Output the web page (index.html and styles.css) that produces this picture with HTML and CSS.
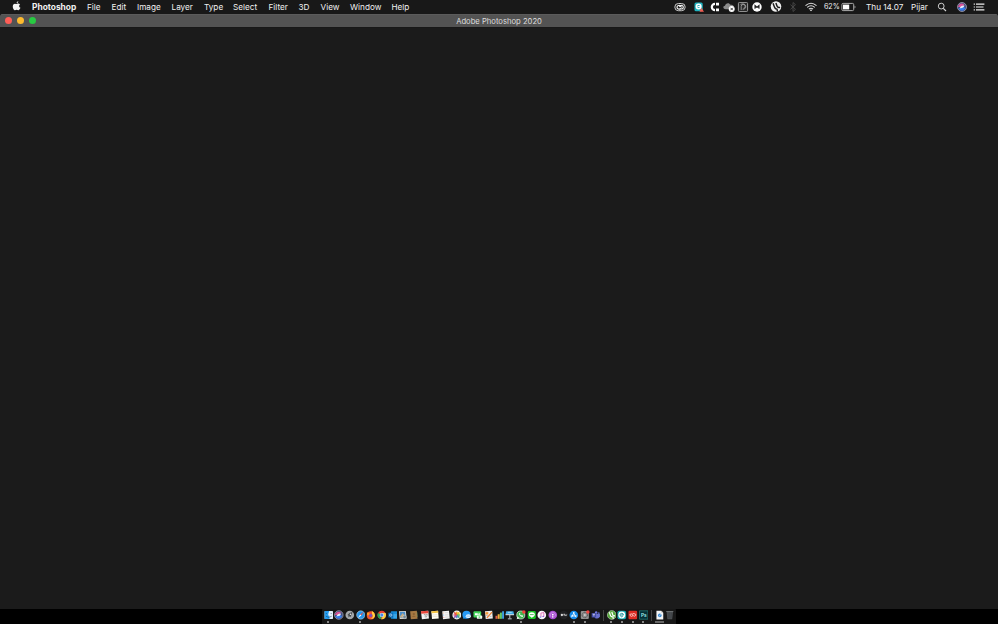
FILE: index.html
```
<!DOCTYPE html>
<html lang="en">
<head>
  <meta charset="UTF-8">
  <title>Adobe Photoshop 2020</title>
  <link rel="stylesheet" href="styles.css">
</head>
<body>
  <header class="menubar">
    <nav class="menus">
      <svg class="apple" viewBox="0 0 10 11"><path d="M7 0.3C5.8 0.5 5 1.4 5.1 2.5C6.3 2.4 7 1.5 7 .3ZM8.9 3.7C7.7 2.4 6.3 2.8 5.3 3.2C4.5 3.2 2.7 2.2 1.5 3.8C0 5.9 1.5 9.7 3.1 10.2C4 10.3 4.4 9.8 5.2 9.8C6 9.8 6.4 10.3 7.2 10.2C8.2 9.9 9 8.5 9.4 7.5C7.5 6.7 7.5 4.7 8.9 3.7Z"/></svg>
      <b>Photoshop</b>
      <span>File</span>
      <span>Edit</span>
      <span>Image</span>
      <span>Layer</span>
      <span>Type</span>
      <span>Select</span>
      <span>Filter</span>
      <span>3D</span>
      <span>View</span>
      <span>Window</span>
      <span>Help</span>
    </nav>
    <div class="status">
      <svg viewBox="0 0 12 10"><rect x=".8" y="1.5" width="10.4" height="7.2" rx="3.6" fill="none" stroke="#ccc"/><path d="M6.6 6.5C5.5 7.8 3 7 3 5.2S5.4 2.8 6.5 4.1L7.6 5.5M5.5 5C6.1 2.7 9.3 3.1 9.3 5.2S7 7.4 6.2 6.3" fill="none" stroke="#eee" stroke-width="1.2"/></svg>
      <svg viewBox="0 0 10 10"><rect x=".5" y=".6" width="8.2" height="8.6" rx="1.5" fill="#20b3bf"/><circle cx="4.6" cy="4.5" r="2.2" fill="#20b3bf" stroke="#fff" stroke-width="1.6"/><path d="M3.5 4.5h3" stroke="#fff"/><path d="M7.3 5.7l2.7 4H5.5z" fill="#f45b50"/></svg>
      <svg viewBox="0 0 10 10"><path d="M5 .7A4.2 4.2 0 0 0 5 9.3V7.1A2.1 2.1 0 0 1 5 2.9ZM6 .7h3v2.8H6zM6 6.5h3v2.8H6z" fill="#fff"/></svg>
      <svg viewBox="0 0 12 10"><path d="M2.8 7.2C-.5 7.1-.2 3.8 2 3.8C2.5 .8 6.3.4 7.4 2.8C10 2.1 11.8 4.5 10.5 7.2Z" fill="#8b8b8b"/><circle cx="8.7" cy="7" r="3" fill="#fff"/><path d="M7.5 5.8l2.4 2.4m0-2.4L7.5 8.2" stroke="#333" stroke-width=".9"/></svg>
      <svg viewBox="0 0 10 10"><rect x=".4" y=".4" width="9.2" height="9.2" rx="1.2" fill="#292929" stroke="#aaa" stroke-width=".9"/><path d="M3.2 8V4.5A2 2 0 1 1 5.4 6.4M2.3 3.1C3.6 1.1 7.4 1.6 7.7 4.3C7.9 6.5 6 7.5 4.6 7.3" fill="none" stroke="#aaa" stroke-width=".8"/></svg>
      <svg viewBox="0 0 10 10"><circle cx="5" cy="5" r="4.7" fill="#fff"/><path d="M3 6.8V3.5L5 5.2L7 3.5V6.8M3 5.1h4" fill="none" stroke="#222" stroke-width="1.1"/></svg>
      <svg class="large" viewBox="0 0 10 10"><circle cx="5" cy="5" r="4.8" fill="#eee"/><path d="M2.3 2L3.4 5Q4.2 7.5 5.6 6.9M4.9 1.8L6 4.8Q6.6 6.4 8.7 5.8M5.8 7L6.4 9.7" fill="none" stroke="#191919" stroke-width="1.3"/></svg>
      <svg viewBox="0 0 10 10"><path d="M2.5 2.7L7.5 7.3L5 9.5V.5L7.5 2.7L2.5 7.3" fill="none" stroke="#4b4b4b" stroke-width=".9"/></svg>
      <svg viewBox="0 0 12 10"><path d="M.5 3.6Q6-1.2 11.5 3.6M2.2 5.4Q6 2.1 9.8 5.4M3.9 7.1Q6 5.3 8.1 7.1" fill="none" stroke="#ddd" stroke-width="1.1"/><path d="M4.8 8L6 9.3L7.2 8Q6 7.2 4.8 8Z" fill="#eee"/></svg>
      <span class="percent">62%</span>
      <svg class="battery" viewBox="0 0 15 10"><rect x=".9" y="1.4" width="11.8" height="7.2" rx="1.2" fill="none" stroke="#bbb" stroke-width=".9"/><path d="M2 2.6h6.2v4.8H2z" fill="#fff"/><path d="M13.6 3.6Q15.3 5 13.6 6.4Z" fill="#bbb"/></svg>
      <span>Thu 14.07</span>
      <span>Pijar</span>
      <svg viewBox="0 0 10 10"><circle cx="4.2" cy="4.1" r="2.9" fill="none" stroke="#ddd" stroke-width=".9"/><path d="M6.3 6.3L9 9" stroke="#ddd" stroke-width="1.1"/></svg>
      <svg viewBox="0 0 10 10"><use href="#siri"/></svg>
      <svg viewBox="0 0 12 10"><path d="M3 2.2h8.4M3 5h7.5M3 7.8h8.4" stroke="#eee" stroke-width="1.2"/><path d="M.7 2.2h1.2M.7 5h1.2M.7 7.8h1.2" stroke="#eee" stroke-width="1.2"/></svg>
    </div>
  </header>

  <main class="window">
    <div class="titlebar">
      <div class="lights">
        <i class="close"></i><i class="minimize"></i><i class="zoom"></i>
      </div>
      <h1>Adobe Photoshop 2020</h1>
    </div>
    <div class="canvas"></div>
  </main>

  <footer class="desktop">
    <div class="dock">
      <!-- Finder, Siri, Launchpad, Safari -->
      <div class="app running"><svg viewBox="0 0 10 10"><rect x=".6" y=".8" width="8.8" height="8.4" rx=".7" fill="#e4f0fb"/><path d="M.6.8h4.9Q4.2 3.5 4.3 5.5h1.2L5.8 9.2H.6z" fill="#249cf0"/><path d="M2.5 3v1M7.5 3v1M2 6.3Q5 8.7 8 6.3" fill="none" stroke="#174260" stroke-width=".6"/></svg></div>
      <div class="app"><svg viewBox="0 0 10 10"><g id="siri"><circle cx="5" cy="5" r="4.5" fill="#444b7c" stroke="#c4c7d6" stroke-width=".6"/><path d="M1 5C2.2 1 5 .8 7.3 2.5L5 5Z" fill="#dc5599"/><path d="M1.5 6.5L5.2 4.5L8.5 6C7.5 8.8 4 10 1.5 6.5Z" fill="#347fee"/><path d="M2.5 6.2Q4 2.8 7.5 3.6Q6.6 6.6 2.5 6.2Z" fill="#e6edf8"/></g></svg></div>
      <div class="app"><svg viewBox="0 0 10 10"><circle cx="5" cy="5" r="4.5" fill="#a3a7aa"/><path d="M7.8 2L5.8 7L4.8 6.3L3.5 7.7L3.7 5.6L2.5 5Q4.4 2.5 7.8 2Z" fill="#42484c"/><circle cx="5.7" cy="4.3" r=".8" fill="#eee"/></svg></div>
      <div class="app running"><svg viewBox="0 0 10 10"><circle cx="5" cy="5" r="4.3" fill="#2795ea" stroke="#c6d9e5" stroke-width=".6"/><path d="M8 2L5.6 5.6L4.3 4.4Z" fill="#f04b3d"/><path d="M2 8L4.3 4.4L5.6 5.6Z" fill="#fff"/></svg></div>
      <!-- Firefox, Chrome, Outlook, Preview -->
      <div class="app"><svg viewBox="0 0 10 10"><circle cx="5" cy="5.4" r="4.2" fill="#f1532e"/><path d="M6 .5Q10.6 3.5 9 7.2Q7.7 9.4 4.9 9.2Q8 7.8 6.5 4.5Z" fill="#ffd23d"/><circle cx="4.9" cy="5.4" r="1.8" fill="#7951bb"/><path d="M1 2L2 3L3 2.5L4 4L2.5 5.5L1 5Z" fill="#ff9a20"/></svg></div>
      <div class="app"><svg viewBox="0 0 10 10"><circle cx="5" cy="5" r="4.5" fill="#e84435"/><path d="M1.1 2.8L4.5 5L4.4 9.5A4.5 4.5 0 0 1 1.1 2.8Z" fill="#23a455"/><path d="M9 3A4.5 4.5 0 0 1 4.4 9.5L7 5L5 3Z" fill="#f7ce42"/><circle cx="5" cy="5" r="2.2" fill="#fff"/><circle cx="5" cy="5" r="1.7" fill="#438be8"/></svg></div>
      <div class="app"><svg viewBox="0 0 10 10"><rect x="3" y="1" width="6.5" height="8" rx=".5" fill="#178dda"/><path d="M5.5 4h4v4.5h-4z" fill="#3aa5e6"/><rect x=".4" y="2.6" width="5" height="5" fill="#0968b5"/><circle cx="2.9" cy="5.1" r="1.2" fill="none" stroke="#d6eaf8" stroke-width=".7"/></svg></div>
      <div class="app"><svg viewBox="0 0 10 10"><path d="M1 1l7.2-.2.8 8-7.2.4z" fill="#e1e1dc"/><path d="M1.8 1.8l5.6-.2.6 6-5.6.3z" fill="#4b8dca"/><path d="M2.2 6.5L5 3l2.8 4.3-5.4.4z" fill="#c6ad85"/><circle cx="6.8" cy="7" r="1.8" fill="#738795" stroke="#dadada" stroke-width=".5"/></svg></div>
      <!-- Contacts, Calendar, Notes, Reminders -->
      <div class="app"><svg viewBox="0 0 10 10"><path d="M1.2 1l7-.4.7 8.2-7 .5z" fill="#a77943"/><circle cx="5" cy="4" r="1.2" fill="#8b6233"/><path d="M3 7Q5 4.5 7 6.7Z" fill="#8b6233"/><path d="M8.3 2l.4 5" stroke="#7aa267" stroke-width=".5"/></svg></div>
      <div class="app"><svg viewBox="0 0 10 10"><path d="M1 1.2l7.6-.6.7 8-7.3.7z" fill="#f4f4f4"/><path d="M1 1.2l7.6-.6.2 2.5-7.6.6z" fill="#e9483d"/><path d="M4 4.5h1.5v3M6.2 4.4h1.5L6.5 7.5" fill="none" stroke="#777" stroke-width=".6"/></svg></div>
      <div class="app"><svg viewBox="0 0 10 10"><path d="M1.4 1.2l7-.5.7 8-7 .5z" fill="#fffdf0"/><path d="M1.4 1.2l7-.5.2 2-7 .5z" fill="#f3c446"/><path d="M2.4 5l5.3-.4M2.6 6.7L8 6.3" stroke="#d6d3c8" stroke-width=".5"/></svg></div>
      <div class="app"><svg viewBox="0 0 10 10"><path d="M1.3 1l7-.4.8 8.1-7 .6z" fill="#f5f5f5"/><path d="M3.8 2.7L7.5 2.5M3.9 5L7.7 4.8M4.1 7.3L8 7" stroke="#bbb" stroke-width=".5"/><circle cx="2.6" cy="2.8" r=".5" fill="#f28437"/><circle cx="2.8" cy="5.1" r=".5" fill="#438fe8"/><circle cx="3" cy="7.3" r=".5" fill="#e54d42"/></svg></div>
      <!-- Photos, Messages, FaceTime, Pages -->
      <div class="app"><svg viewBox="0 0 10 10"><circle cx="5" cy="5" r="4.6" fill="#f4f2ef"/><g stroke-width="1.7" stroke-linecap="round"><path d="M5 4V2.3" stroke="#f5a526"/><path d="M5.7 4.3l1.5-1.5" stroke="#e5c42b"/><path d="M6 5h1.7" stroke="#79bc45"/><path d="M5.7 5.7l1.5 1.5" stroke="#45a993"/><path d="M5 6v1.7" stroke="#4e86cc"/><path d="M4.3 5.7L2.8 7.2" stroke="#9a5db5"/><path d="M4 5H2.3" stroke="#d84d84"/><path d="M4.3 4.3L2.8 2.8" stroke="#ea5540"/></g></svg></div>
      <div class="app"><svg viewBox="0 0 10 10"><ellipse cx="4.7" cy="4.7" rx="4.3" ry="4.1" fill="#2799f5"/><path d="M1.8 6.5L1 9l3-1z" fill="#2799f5"/><ellipse cx="6.6" cy="6.2" rx="2.7" ry="2" fill="#e7f4fe"/><path d="M4.5 6.2h4.1" stroke="#57aaf1" stroke-width=".7"/></svg></div>
      <div class="app"><svg viewBox="0 0 10 10"><rect x=".5" y="1.2" width="8" height="6.4" rx="1" fill="#42d65a"/><path d="M2 3.2h3v2H2zM5.5 3.8L7 3v2.6l-1.5-.8z" fill="#fff"/><rect x="4" y="5.5" width="5.6" height="3.5" rx="1" fill="#effff0"/><path d="M6 6.2l2 1-2 1z" fill="#2bc44b"/></svg></div>
      <div class="app"><svg viewBox="0 0 10 10"><path d="M1 1l7.5-.4.7 8-7.4.6z" fill="#f0efed"/><path d="M1.5 2h3v2.5h-3z" fill="#f29a38"/><path d="M2.5 7.7L7.8 1.5l1 .8-5.2 6z" fill="#e98134"/><path d="M2 5.5h2M5.8 6.5h2" stroke="#999" stroke-width=".6"/></svg></div>
      <!-- Numbers, Keynote, WhatsApp, LINE -->
      <div class="app"><svg viewBox="0 0 10 10"><path d="M.5 5.8h2.1V9H.5z" fill="#e65b4c"/><path d="M2.8 4.2h2.1V9H2.8z" fill="#f4b43d"/><path d="M5.1 2.5h2.1V9H5.1z" fill="#64c967"/><path d="M7.4 1h2.1v8H7.4z" fill="#3d9fe1"/></svg></div>
      <div class="app"><svg viewBox="0 0 10 10"><path d="M1.3 1h7.4l.8 3.6h-9z" fill="#42afe8"/><path d="M.6 4.2h8.8v1H.6z" fill="#e9f3f7"/><path d="M5 5v3.5M3 9h4" stroke="#c8d0d4" stroke-width="1"/><path d="M3 2.2h4" stroke="#d6f3ff" stroke-width=".7"/></svg></div>
      <div class="app running"><svg viewBox="0 0 10 10"><circle cx="5" cy="5" r="4.2" fill="#42b650" stroke="#ecf6e9" stroke-width=".7"/><path d="M1.5 6.2L.7 9.3l3-.8" fill="#ecf6e9"/><path d="M3.2 2.7Q2.8 6.5 7 7L7.3 5.7L6 5.1L5.4 5.7Q4.5 5.2 4.2 4.5L4.6 3.7Z" fill="#fff"/><circle cx="8.2" cy="1.8" r="1.8" fill="#f3423a"/></svg></div>
      <div class="app"><svg viewBox="0 0 10 10"><rect x=".8" y=".8" width="8.4" height="8.4" rx="1.5" fill="#1bc426"/><ellipse cx="5" cy="4.6" rx="3.1" ry="2.4" fill="#fff"/><path d="M3.5 6.3L5 8l2-2z" fill="#fff"/><path d="M3 4.6h4" stroke="#23a92a" stroke-width=".8"/></svg></div>
      <!-- Music, Podcasts, Apple TV, App Store -->
      <div class="app"><svg viewBox="0 0 10 10"><circle cx="5" cy="5" r="4.5" fill="#f9f6fb"/><path d="M4.1 7.2V3l3-.6v4" fill="none" stroke="#da55a7" stroke-width=".8"/><ellipse cx="3.5" cy="7.2" rx="1" ry=".7" fill="#5c91e8"/><ellipse cx="6.5" cy="6.5" rx="1" ry=".7" fill="#9a62d9"/></svg></div>
      <div class="app"><svg viewBox="0 0 10 10"><circle cx="5" cy="5" r="4.5" fill="#a74ed0"/><path d="M3 6.8A2.7 2.7 0 1 1 7 6.8" fill="none" stroke="#dfb3f0" stroke-width=".6"/><circle cx="5" cy="4.5" r=".9" fill="#fff"/><path d="M5 5.8v2" stroke="#fff" stroke-width="1.1"/></svg></div>
      <div class="app"><svg viewBox="0 0 10 10"><circle cx="5" cy="5" r="4.5" fill="#202123"/><circle cx="3" cy="5" r="1.2" fill="#ddd"/><path d="M4.6 4.3h1.6M5.4 3.7v2.4M6.4 4.3l.8 1.8.9-1.8" fill="none" stroke="#ddd" stroke-width=".7"/></svg></div>
      <div class="app running"><svg viewBox="0 0 10 10"><circle cx="5" cy="5" r="4.5" fill="#168dec"/><path d="M5.5 2L2.7 7.4M4.5 2l2.8 5.4M2 6h6" fill="none" stroke="#fff" stroke-width=".9"/></svg></div>
      <!-- System Preferences, Teams -->
      <div class="app running"><svg viewBox="0 0 10 10"><rect x=".8" y=".8" width="8.4" height="8.4" rx="1.2" fill="#929292"/><circle cx="5" cy="5" r="2.8" fill="none" stroke="#484848" stroke-width="1" stroke-dasharray="1 .5"/><circle cx="5" cy="5" r="1.1" fill="#ccc"/><circle cx="8.2" cy="1.8" r="1.8" fill="#f24440"/></svg></div>
      <div class="app"><svg viewBox="0 0 10 10"><circle cx="5.4" cy="2.3" r="1.3" fill="#747be0"/><circle cx="8.1" cy="3" r=".9" fill="#5860bd"/><path d="M4 3.8h5.3v2.8Q7.7 10 4 8z" fill="#6970cc"/><path d="M.7 3h4.6v4.6H.7z" fill="#454ea9"/><path d="M1.8 4.2h2.4M3 4.2v2.3" stroke="#fff" stroke-width=".6"/></svg></div>
      <i class="divider"></i>
      <!-- uTorrent, PicsArt, Creative Cloud, Photoshop -->
      <div class="app running"><svg viewBox="0 0 10 10"><circle cx="5" cy="5" r="4.6" fill="#55a83b" stroke="#e7f3e2" stroke-width=".5"/><path d="M2.5 2.2l1.1 3.2q.6 1.8 2.2 1.1M5 1.9l1.1 3q.6 1.3 2.2.8M6 6.5l.6 2.5" fill="none" stroke="#fff" stroke-width="1.3"/></svg></div>
      <div class="app running"><svg viewBox="0 0 10 10"><rect x=".5" y=".5" width="9" height="9" rx="1.9" fill="#19aab2"/><circle cx="5" cy="5" r="3.6" fill="#fff"/><path d="M6.8 5H4.2M6.6 5A1.7 1.7 0 1 0 6 6.3" fill="none" stroke="#168e98" stroke-width="1"/></svg></div>
      <div class="app running"><svg viewBox="0 0 10 10"><rect x=".5" y=".5" width="9" height="9" rx="1.1" fill="#dd2d24"/><path d="M5.2 5.6Q3.6 7.3 2.3 5.7T3.5 3.8L5.8 5.8Q7 6.9 8 5.5T6.2 3.5Q4.7 3.2 4.2 4.5" fill="none" stroke="#ffe5e2" stroke-width=".8"/></svg></div>
      <div class="app running"><svg viewBox="0 0 10 10"><rect x=".7" y=".7" width="8.6" height="8.6" fill="#062f37" stroke="#238582" stroke-width=".7"/><text class="ps" x="2" y="7">Ps</text></svg></div>
      <i class="divider"></i>
      <div class="app file"><svg viewBox="0 0 10 10"><path d="M1.5.5h5L8.6 2.6v7H1.5z" fill="#f4f4f4"/><circle cx="5" cy="5.4" r="1.9" fill="#3588d4"/><path d="M4.3 6.5L5.8 4.2" stroke="#fff" stroke-width=".6"/><path d="M6.5.5v2h2.1" fill="#b8b8b8"/></svg></div>
      <div class="app"><svg viewBox="0 0 10 10"><path d="M1.6 1.2h6.8L7.5 9.3h-5z" fill="#4c4f52"/><path d="M1.3.9h7.4v.9H1.3z" fill="#707376"/><path d="M3.2 2.5l.5 6M5 2.5v6M6.8 2.5l-.5 6" stroke="#373b40" stroke-width=".6"/></svg></div>
    </div>
  </footer>
</body>
</html>
```
FILE: styles.css
```
* {
  box-sizing: border-box;
}

body {
  margin: 0;
  height: 100vh;
  display: flex;
  flex-direction: column;
  overflow: hidden;
  background: #000;
  color: #f0f0f0;
  font-family: Inter, "Liberation Sans", sans-serif;
  font-size: 8.2px;
  line-height: 14px;
}

svg {
  display: block;
}

.menubar {
  height: 14px;
  flex: none;
  display: flex;
  justify-content: space-between;
  background: #181818;
  white-space: nowrap;
}

.menus {
  display: grid;
  grid-template-columns: 20px 55px 24.5px 25.5px 34.5px 32.5px 29px 35.5px 30px 22px 29.5px 41.5px 30px;
  padding-left: 12px;
}

.menus b {
  font-size: 8.4px;
}

.apple {
  width: 9px;
  height: 10px;
  margin-top: 1px;
  fill: #f5f5f5;
}

.status {
  display: grid;
  grid-template-columns: 19px 16px 14px 13.5px 14.5px 18.5px 17.5px 18px 19px 17px 25px 45px 25px 19.5px 17.5px 25px;
  width: 324px;
}

.status svg {
  height: 10px;
  width: 12px;
  margin-top: 2px;
}

.status .large {
  height: 11px;
  margin-top: 1px;
}

.status .battery {
  width: 15px;
}

.percent {
  font-size: 7.2px;
  letter-spacing: -0.1px;
}

.window {
  flex: 1;
  display: flex;
  flex-direction: column;
  min-height: 0;
}

.titlebar {
  height: 13px;
  flex: none;
  display: grid;
  grid-template-columns: 1fr auto 1fr;
  background: #535353;
  border-top: 1px solid #5b5b5b;
  border-radius: 2px 2px 0 0;
}

.lights {
  display: flex;
  gap: 5px;
  padding: 2px 0 0 5px;
}

.lights i {
  width: 7px;
  height: 7px;
  border-radius: 50%;
}

.close {
  background: #ff5e57;
}

.minimize {
  background: #febb2e;
}

.zoom {
  background: #28ca42;
}

h1 {
  margin: 0;
  font-size: 7.65px;
  line-height: 13px;
  font-weight: 400;
  color: #dedede;
}

.canvas {
  flex: 1;
  background: #1b1b1b;
  border-top: 1px solid #181818;
}

.desktop {
  height: 15px;
  flex: none;
  display: flex;
  justify-content: center;
}

.dock {
  width: 354px;
  display: flex;
  padding-left: 1px;
  background: #171717;
  border-radius: 1px 1px 0 0;
}

.app {
  width: 10.7px;
  height: 15px;
  flex: none;
  display: flex;
  flex-direction: column;
  align-items: center;
  padding-top: 1px;
}

.app svg {
  width: 9.6px;
  height: 10px;
}

.running::after {
  content: "";
  width: 2px;
  height: 2px;
  margin-top: 1px;
  border-radius: 50%;
  background: #aaa;
}

.ps {
  font-size: 5px;
  font-weight: 600;
  fill: #a5efed;
}

.file::after {
  content: "";
  width: 9px;
  height: 2px;
  margin-top: 1px;
  background: #666;
}

.divider {
  width: 1px;
  height: 11px;
  margin: 1px 2.1px 0;
  background: #424242;
}
```
